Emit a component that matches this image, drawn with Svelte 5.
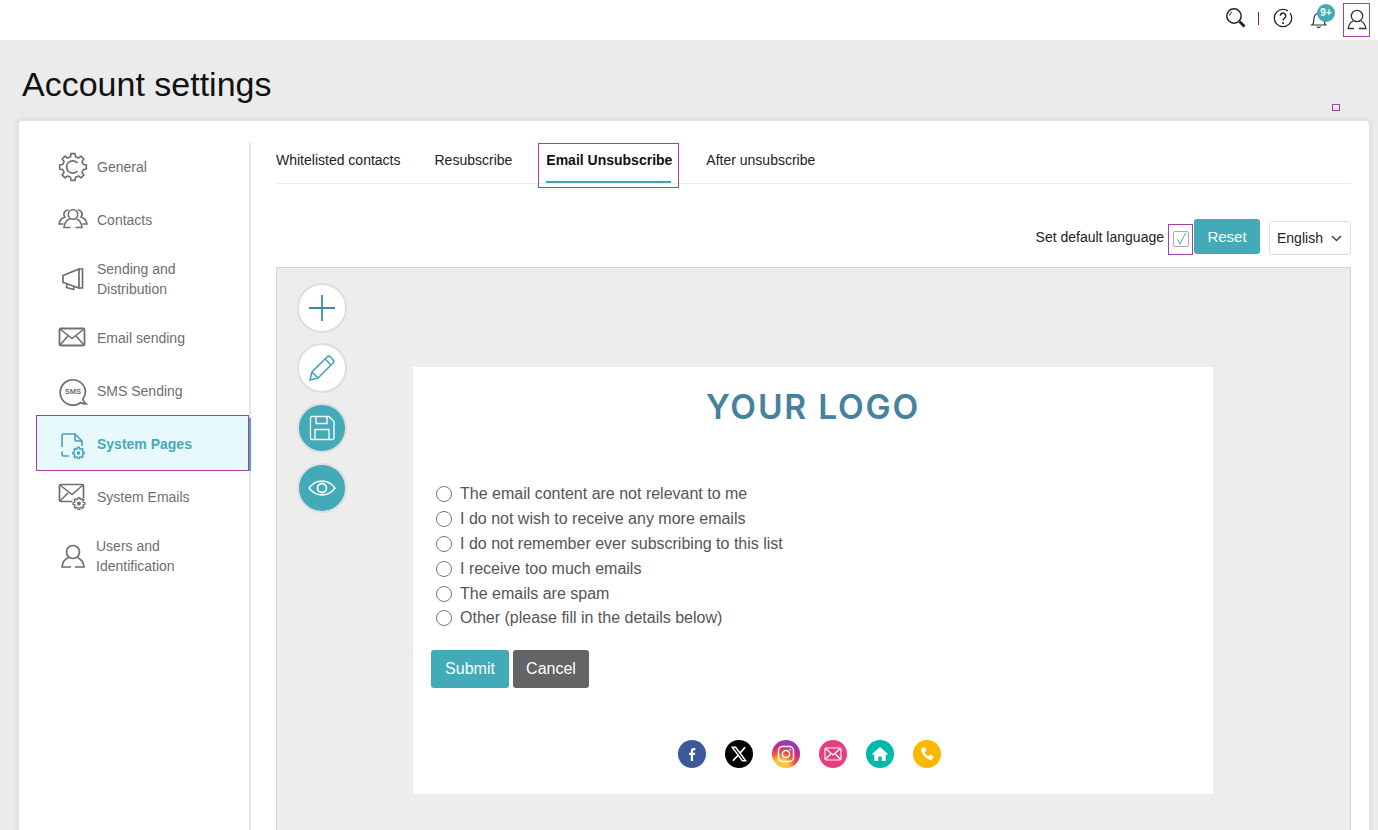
<script>
  const navItems = [
    { label: "General", icon: "gear", h: 52 },
    { label: "Contacts", icon: "people", h: 53 },
    { label: "Sending and Distribution", icon: "megaphone", h: 65 },
    { label: "Email sending", icon: "mail", h: 53 },
    { label: "SMS Sending", icon: "sms", h: 53 },
    { label: "System Pages", icon: "page", h: 56, active: true },
    { label: "System Emails", icon: "sysmail", h: 52 },
    { label: "Users and Identification", icon: "user", h: 65, tight: true }
  ];
  const tabs = ["Whitelisted contacts", "Resubscribe", "Email Unsubscribe", "After unsubscribe"];
  const reasons = [
    "The email content are not relevant to me",
    "I do not wish to receive any more emails",
    "I do not remember ever subscribing to this list",
    "I receive too much emails",
    "The emails are spam",
    "Other (please fill in the details below)"
  ];

  // cog outline, n teeth between radius r1 and r2
  function cog(cx, cy, r1, r2, n) {
    const pts = [];
    const step = (Math.PI * 2) / n;
    for (let i = 0; i < n; i++) {
      const a = i * step - Math.PI / 2;
      const w = step * 0.2;
      const pairs = [[r1, a - step * 0.3], [r2, a - w], [r2, a + w], [r1, a + step * 0.3]];
      for (const [r, t] of pairs) {
        pts.push((cx + r * Math.cos(t)).toFixed(2) + " " + (cy + r * Math.sin(t)).toFixed(2));
      }
    }
    return "M" + pts.join("L") + "z";
  }
</script>

<div class="page">
  <header class="topbar">
    <svg class="top-search" width="24" height="24" viewBox="0 0 24 24" fill="none" stroke="#222">
      <circle cx="10" cy="10" r="7.200" stroke-width="1.500" />
      <path d="M15.500 15.500l5 5" stroke-width="2.800" />
      <path d="M5.500 9.500a4.500 4.500 0 0 1 2.500-3.500" stroke-width="1" />
    </svg>
    <span class="sep"></span>
    <svg class="top-help" width="20" height="20" viewBox="0 0 20 20" fill="none" stroke="#222">
      <circle cx="10" cy="10" r="8.700" stroke-width="1.300" stroke-dasharray="46 3" />
      <path d="M7.300 7.800a2.700 2.700 0 1 1 4.300 2.200c-1 .7-1.600 1.200-1.600 2.400" stroke-width="1.500" />
      <circle cx="10" cy="15" r="1" fill="#222" stroke="none" />
    </svg>
    <div class="bell">
      <svg width="20" height="22" viewBox="0 0 20 22" fill="none" stroke="#333" stroke-width="1.200">
        <path d="M1.500 18h16M3.500 18c1.500-2 1-4 1.500-7 .5-3 2.500-5 5-5s4.500 2 5 5c.5 3 0 5 1.500 7" />
        <path d="M8 19.500a2 2 0 0 0 3.500 0" />
      </svg>
      <span class="badge">9+</span>
    </div>
    <div class="user-box">
      <svg width="20" height="22" viewBox="0 0 20 22" fill="none" stroke="#333" stroke-width="1.300">
        <circle cx="10" cy="7" r="5.700" />
        <path d="M6 12c-2.500 1.500-4.500 4-4.800 7.500H7M14 12c2.500 1.500 4.500 4 4.800 7.500H12" />
      </svg>
    </div>
  </header>

  <main class="content">
    <div class="title-row">
      <h1>Account settings</h1>
      <span class="stray-box"></span>
    </div>

    <section class="card">
      <nav class="sidebar">
        {#each navItems as item}
          <div class="nav-item" class:active={item.active} class:tight={item.tight} style="height: {item.h}px">
            <svg class="nav-icon" width="30" height="30" viewBox="0 0 30 30" fill="none" stroke="currentColor" stroke-width="1.600">
              {#if item.icon === "gear"}
                <path d={cog(15, 15, 10.500, 13.500, 8)} stroke-linejoin="round" />
                <path d="M19.500 11a6.200 6.200 0 1 0 0 8" stroke-width="1.700" />
              {:else if item.icon === "people"}
                <circle cx="15" cy="9.500" r="4.700" />
                <path d="M10.500 5a4.200 4.200 0 0 0-3.500 7c-3 1-5.500 3.500-6 7h4.500M19.500 5a4.200 4.200 0 0 1 3.500 7c3 1 5.500 3.500 6 7h-4.500" />
                <path d="M11.500 14c-3 1-5 4-5.500 8.500h6.500M18.500 14c3 1 5 4 5.500 8.500h-6.500" />
              {:else if item.icon === "megaphone"}
                <path d="M5 11.500L21 5v19l-16-5.500zM21 5h3.500v19H21" stroke-width="1.700" />
                <path d="M9 20l-.5 3.500 7 2 1-3.500" stroke-width="1.700" />
              {:else if item.icon === "mail"}
                <rect x="1.500" y="5.500" width="25" height="17" rx="1.500" stroke-width="1.800" />
                <path d="M2 6l12 9.500L26 6M2 22l8.500-9.500M26 22l-8.500-9.500" stroke-width="1.500" />
              {:else if item.icon === "sms"}
                <path d="M28 28c-2 0-4-.6-5.300-1.500A12.700 12.700 0 1 1 27.500 15c0 3.300-.9 6-2.700 8.300.6 2 1.800 3.600 3.200 4.700z" stroke-width="1.700" />
                <text x="15" y="17.700" text-anchor="middle" class="sms-text">SMS</text>
              {:else if item.icon === "page"}
                <path d="M11 27H5.500A1.500 1.500 0 0 1 4 25.500v-3M4 18V6.500A1.500 1.500 0 0 1 5.500 5H17l7 7v5" stroke-width="1.600" />
                <path d="M17 5v6a1 1 0 0 0 1 1h6" stroke-width="1.600" />
                <path d={cog(20.500, 24, 4.300, 5.800, 8)} stroke-width="1.300" stroke-linejoin="round" />
                <circle cx="20.500" cy="24" r="1.800" fill="currentColor" stroke="none" />
              {:else if item.icon === "sysmail"}
                <rect x="1.500" y="2.500" width="24" height="17" rx="1.500" stroke-width="1.700" />
                <path d="M2 3l12 9.500L25 3M2 19l8-8" stroke-width="1.500" />
                <circle cx="21" cy="21.500" r="7" fill="#fff" stroke="none" />
                <path d={cog(21, 21.500, 4.500, 6, 8)} stroke-width="1.300" stroke-linejoin="round" />
                <circle cx="21" cy="21.500" r="1.900" fill="currentColor" stroke="none" />
              {:else}
                <circle cx="15" cy="11" r="6.500" stroke-width="1.700" />
                <path d="M10.500 16.500c-3.500 1.500-6 4.500-6.500 9.500h9M19.500 16.500c3.500 1.500 6 4.500 6.500 9.500h-9" stroke-width="1.700" />
              {/if}
            </svg>
            <span class="nav-label">{item.label}</span>
          </div>
        {/each}
      </nav>

      <div class="panel">
        <div class="tabs">
          {#each tabs as tab, i}
            <div class="tab" class:current={i === 2}><span>{tab}</span></div>
          {/each}
        </div>

        <div class="lang-row">
          <span class="lang-label">Set default language</span>
          <div class="check-box">
            <span class="check">
              <svg width="14" height="14" viewBox="0 0 14 14" fill="none" stroke="#43aab7" stroke-width="1">
                <path d="M3.500 7.500l2.500 4.500L11.500 1" />
              </svg>
            </span>
          </div>
          <button class="reset">Reset</button>
          <div class="select">
            <span>English</span>
            <svg width="11" height="7" viewBox="0 0 11 7" fill="none" stroke="#444" stroke-width="1.500"><path d="M1 1l4.500 4.500L10 1" /></svg>
          </div>
        </div>

        <div class="editor">
          <div class="tools">
            <div class="tool">
              <svg width="30" height="30" viewBox="0 0 30 30" fill="none" stroke="#3f8aa6" stroke-width="1.800"><path d="M15 2v26M2 15h26" /></svg>
            </div>
            <div class="tool">
              <svg width="30" height="30" viewBox="0 0 30 30" fill="none" stroke="#43a0b5" stroke-width="1.500">
                <path d="M3 27l2-8L20 4a2.500 2.500 0 0 1 3.500 0l2.500 2.500a2.500 2.500 0 0 1 0 3.500L11 25zM5 19l6 6M18 6l6 6" />
              </svg>
            </div>
            <div class="tool filled">
              <svg width="28" height="28" viewBox="0 0 28 28" fill="none" stroke="#fff" stroke-width="1.300">
                <path d="M4 2.500h17l5 5V24a1.500 1.500 0 0 1-1.500 1.500h-20A1.500 1.500 0 0 1 2.500 24V4A1.500 1.500 0 0 1 4 2.500z" />
                <path d="M8 2.500v7h11v-7M7 25.500V15.500h14v10" />
              </svg>
            </div>
            <div class="tool filled">
              <svg width="30" height="30" viewBox="0 0 30 30" fill="none" stroke="#fff" stroke-width="1.500">
                <path d="M2 15c3.500-4.500 8-7 13-7s9.500 2.500 13 7c-3.500 4.500-8 7-13 7S5.500 19.500 2 15z" />
                <circle cx="15" cy="15" r="4.500" stroke-width="1.800" />
              </svg>
            </div>
          </div>

          <div class="sheet">
            <div class="logo">YOUR LOGO</div>
            <div class="reasons">
              {#each reasons as reason}
                <div class="reason"><span class="radio"></span>{reason}</div>
              {/each}
            </div>
            <div class="actions">
              <button class="submit">Submit</button>
              <button class="cancel">Cancel</button>
            </div>
            <div class="socials">
              <span class="social fb">
                <svg width="16" height="16" viewBox="0 0 16 16" fill="#fff"><path d="M9 15V9h2l.3-2.300H9V5.300c0-.7.2-1.100 1.100-1.100h1.200V2.100C11 2 10.400 2 9.700 2 8 2 6.800 3 6.800 5v1.700H5V9h1.800v6z" /></svg>
              </span>
              <span class="social x">
                <svg width="18" height="18" viewBox="0 0 16 16" fill="none" stroke="#fff"><path d="M2 2h3l9 12h-3z" stroke-width="1.300" /><path d="M13.500 2L9 7M7 9.500L2.500 14" stroke-width="1.500" /></svg>
              </span>
              <span class="social ig">
                <svg width="20" height="20" viewBox="0 0 20 20" fill="none" stroke="#fff" stroke-width="1.500"><rect x="2.500" y="2.500" width="15" height="15" rx="4" /><circle cx="10" cy="10" r="3.600" /><circle cx="14.300" cy="5.700" r=".9" fill="#fff" stroke="none" /></svg>
              </span>
              <span class="social em">
                <svg width="20" height="20" viewBox="0 0 20 20" fill="none" stroke="#fff" stroke-width="1.200"><rect x="2" y="4" width="16" height="12" rx="1.200" /><path d="M2.500 4.500L10 11l7.500-6.500M2.500 15.500L8 9.500M17.500 15.500L12 9.500" /></svg>
              </span>
              <span class="social home">
                <svg width="20" height="20" viewBox="0 0 20 20" fill="#fff"><path d="M10 3L1.500 10.500h2.800V17h4v-4.500h3.400V17h4v-6.500h2.800z" /></svg>
              </span>
              <span class="social ph">
                <svg width="18" height="18" viewBox="0 0 18 18" fill="#fff"><path d="M5.600 2.300L4 3.300c-.9.700-.9 2 -.5 3.300.9 3 4.800 7.300 8 8.100 1.300.3 2.300 0 2.900-.8l1-1.400c.3-.4.200-.8-.2-1.100l-2.300-1.500c-.4-.2-.8-.2-1.100.2l-.8 1c-.2.300-.5.300-.8.200-1.300-.7-2.900-2.500-3.400-3.800-.1-.3 0-.6.300-.8l1-.7c.4-.3.500-.7.300-1.100L7 2.600c-.3-.5-.9-.6-1.400-.3z" /></svg>
              </span>
            </div>
          </div>
        </div>
      </div>
    </section>
  </main>
</div>

<style>
  :global(body) {
    margin: 0;
    overflow: hidden;
    background: #ebebeb;
    font-family: "Liberation Sans", Arial, sans-serif;
  }

  .page {
    width: 1378px;
    height: 830px;
    overflow: hidden;
  }

  .topbar {
    height: 40px;
    background: #fff;
    display: flex;
    align-items: center;
    justify-content: flex-end;
    padding: 0 8px 4px 0;
    box-sizing: border-box;
  }

  .top-search { margin-right: 10px; }

  .sep {
    width: 1px;
    height: 13px;
    background: #8a1c4a;
    margin-right: 14px;
  }

  .top-help { margin-right: 16px; }

  .bell {
    position: relative;
    width: 20px;
    height: 22px;
    margin-right: 14px;
  }

  .badge {
    position: absolute;
    top: -3px;
    left: 8px;
    width: 18px;
    height: 18px;
    border-radius: 50%;
    background: #43aab7;
    color: #fff;
    font-size: 10px;
    font-weight: bold;
    line-height: 17px;
    text-align: center;
  }

  .user-box {
    width: 27px;
    height: 34px;
    margin-top: 3px;
    border: 1px solid #a341a3;
    box-sizing: border-box;
    display: flex;
    align-items: center;
    justify-content: center;
  }

  .content { padding: 0 9px 0 19px; }

  .title-row {
    position: relative;
    height: 81px;
    box-sizing: border-box;
    padding: 24px 0 0 3px;
  }

  h1 {
    margin: 0;
    font-size: 34px;
    font-weight: 400;
    line-height: 40px;
    color: #111;
  }

  .stray-box {
    position: absolute;
    left: 1313px;
    top: 64px;
    width: 8px;
    height: 7px;
    border: 1px solid #a341a3;
    box-sizing: border-box;
  }

  .card {
    background: #fff;
    border-radius: 4px;
    display: flex;
    height: 720px;
    box-shadow: 0 0 0 4px #e3e5e5;
    padding: 20px 18px 0 17px;
    gap: 25px;
  }

  .sidebar {
    width: 213px;
    flex: none;
    border-right: 2px solid #e6e6e6;
    border-radius: 0 4px 0 0;
  }

  .nav-item {
    display: flex;
    align-items: center;
    box-sizing: border-box;
    padding-left: 22px;
    gap: 9px;
    color: #6d6e71;
    font-size: 14px;
    line-height: 20px;
  }

  .nav-icon {
    flex: none;
    width: 30px;
    height: 30px;
  }

  .nav-label { max-width: 100px; }

  .nav-item.tight { gap: 8px; }

  .nav-item.active {
    background: #e8f9fd;
    color: #43aab7;
    font-weight: bold;
    border: 1px solid #a341a3;
    padding: 2px 0 0 21px;
    width: 213px;
    position: relative;
    margin-top: -2px;
  }

  .nav-item.active .nav-label { max-width: none; }

  .nav-item.active::after {
    content: "";
    position: absolute;
    right: -3px;
    top: 2px;
    bottom: -1px;
    width: 2px;
    background: #43aab7;
  }

  .nav-item.active .nav-icon { color: #43a0b5; }

  .sms-text {
    font-size: 7.500px;
    font-weight: bold;
    fill: currentColor;
    stroke: none;
    font-family: "Liberation Sans", sans-serif;
  }

  .panel {
    flex: 1;
    min-width: 0;
  }

  .tabs {
    display: flex;
    height: 40px;
    border-bottom: 1px solid #ececec;
    margin-top: 2px;
  }

  .tab {
    font-size: 14px;
    color: #222;
    padding-top: 9px;
    margin-right: 34px;
    white-space: nowrap;
  }

  .tab.current {
    font-weight: bold;
    color: #111;
    border: 1px solid #a341a3;
    box-sizing: border-box;
    height: 45px;
    width: 141px;
    margin: 0 27px 0 -8px;
    padding: 8px 7px 0;
  }

  .tab.current span {
    display: block;
    height: 29px;
    border-bottom: 2px solid #43a0b5;
    line-height: 16px;
  }

  .lang-row {
    display: flex;
    align-items: flex-start;
    justify-content: flex-end;
    height: 36px;
    margin-top: 35px;
  }

  .lang-label {
    font-size: 14px;
    line-height: 36px;
    color: #222;
    margin-right: 4px;
  }

  .check-box {
    width: 25px;
    height: 31px;
    margin: 5px 1px 0 0;
    padding-bottom: 2px;
    border: 1px solid #a341a3;
    box-sizing: border-box;
    display: flex;
    align-items: center;
    justify-content: center;
  }

  .check {
    width: 16px;
    height: 16px;
    box-sizing: border-box;
    border: 1px solid #aaa;
    border-radius: 2px;
    display: flex;
    align-items: center;
    justify-content: center;
  }

  button {
    border: 0;
    border-radius: 3px;
    color: #fff;
    font-family: inherit;
    font-size: 16px;
    padding: 0;
  }

  .reset {
    width: 66px;
    height: 35px;
    background: #43aab7;
    font-size: 15px;
    margin-right: 9px;
  }

  .select {
    width: 82px;
    height: 34px;
    margin-top: 2px;
    border: 1px solid #ddd;
    border-radius: 3px;
    box-sizing: border-box;
    display: flex;
    align-items: center;
    justify-content: space-between;
    padding: 0 8px 0 7px;
    font-size: 14px;
    color: #222;
  }

  .editor {
    margin-top: 12px;
    height: 600px;
    background: #ededed;
    border: 1px solid #d4d4d4;
    box-sizing: border-box;
    display: flex;
    padding-top: 15px;
  }

  .tools {
    width: 136px;
    flex: none;
    padding-left: 20px;
    box-sizing: border-box;
    display: flex;
    flex-direction: column;
    gap: 10px;
  }

  .tool {
    width: 50px;
    height: 50px;
    border-radius: 50%;
    background: #fff;
    border: 2px solid #dedede;
    box-sizing: border-box;
    display: flex;
    align-items: center;
    justify-content: center;
  }

  .tool.filled { background: #43aab7; }

  .sheet {
    width: 800px;
    height: 427px;
    background: #fff;
    margin-top: 84px;
    box-sizing: border-box;
    padding: 20px 18px 0;
  }

  .logo {
    text-align: center;
    font-family: Inter, "Open Sans", sans-serif;
    font-size: 33.500px;
    font-weight: 600;
    letter-spacing: 1.800px;
    color: #44829e;
    line-height: 40px;
  }

  .reasons {
    margin-top: 55px;
    display: flex;
    flex-direction: column;
    padding-left: 5px;
  }

  .reason {
    display: flex;
    align-items: center;
    height: 24.800px;
    font-size: 16px;
    color: #555;
    gap: 8px;
  }

  .radio {
    width: 16px;
    height: 16px;
    border: 1px solid #767676;
    border-radius: 50%;
    box-sizing: border-box;
    background: #fff;
  }

  .actions {
    margin-top: 19px;
    display: flex;
    gap: 4px;
  }

  .submit {
    width: 78px;
    height: 38px;
    background: #43aab7;
  }

  .cancel {
    width: 76px;
    height: 38px;
    background: #636466;
  }

  .socials {
    margin-top: 52px;
    display: flex;
    justify-content: center;
    gap: 19px;
    transform: translateX(-4px);
  }

  .social {
    width: 28px;
    height: 28px;
    border-radius: 50%;
    display: flex;
    align-items: center;
    justify-content: center;
  }

  .fb { background: #3b5998; }
  .x { background: #000; }
  .ig { background: radial-gradient(circle at 30% 100%, #fdc33d 0 25%, #f0503a 45%, #c9288f 65%, #5b51d8 95%); }
  .em { background: #e83e80; }
  .home { background: #00b9a9; }
  .ph { background: #fbb800; }
</style>
